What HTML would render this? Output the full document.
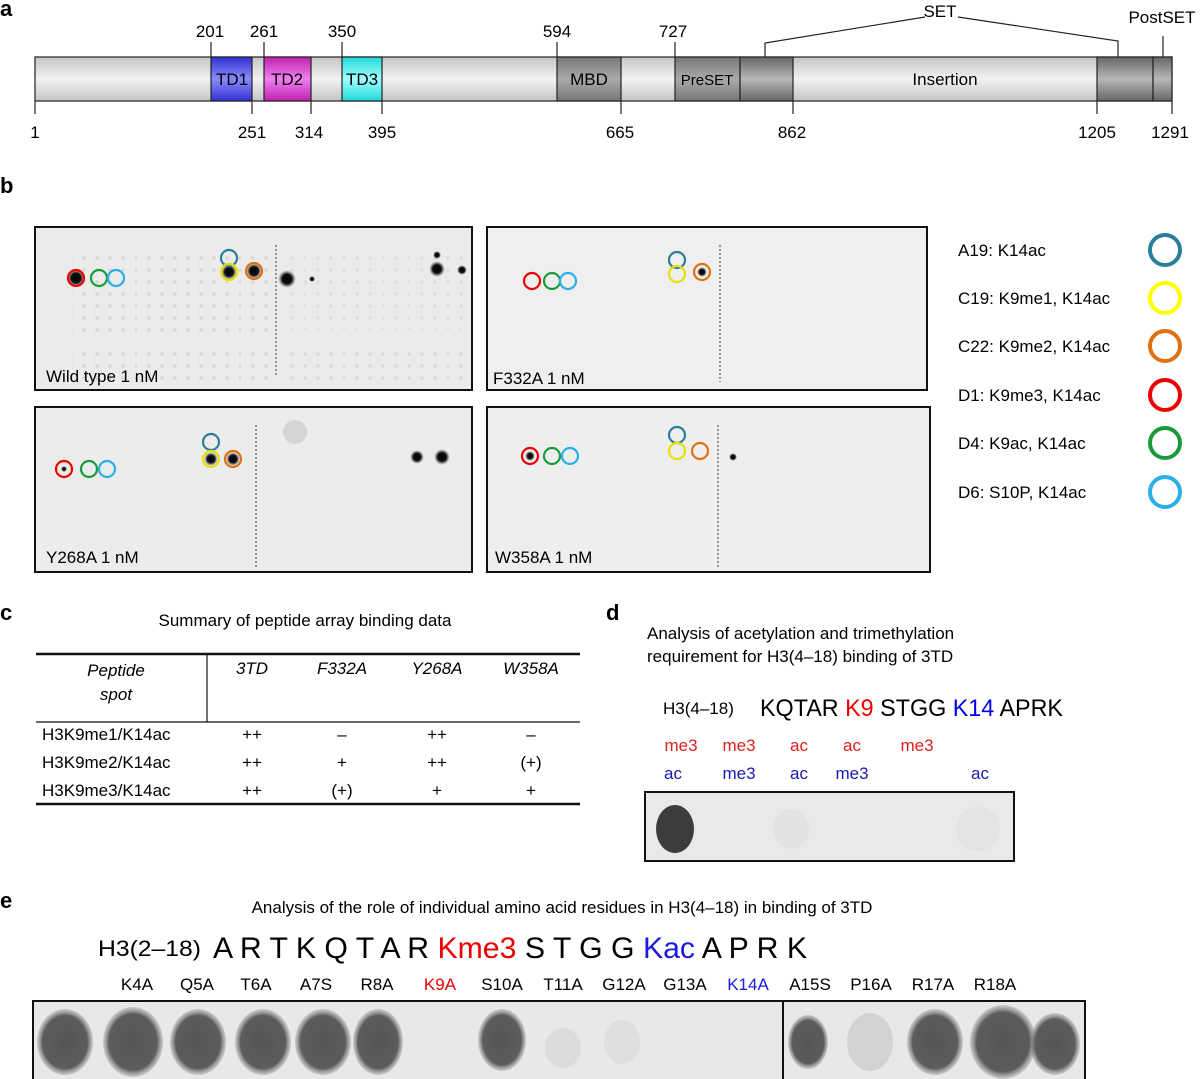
<!DOCTYPE html>
<html><head><meta charset="utf-8"><style>
html,body{margin:0;padding:0;background:#fff}
svg{display:block}
text{font-family:"Liberation Sans",Arial,sans-serif}
</style></head><body>
<svg width="1200" height="1079" viewBox="0 0 1200 1079" xmlns="http://www.w3.org/2000/svg">
<defs>
<linearGradient id="gl" x1="0" y1="0" x2="0" y2="1"><stop offset="0" stop-color="#c4c4c4"/><stop offset=".5" stop-color="#f2f2f2"/><stop offset="1" stop-color="#c4c4c4"/></linearGradient>
<linearGradient id="gd" x1="0" y1="0" x2="0" y2="1"><stop offset="0" stop-color="#666"/><stop offset=".5" stop-color="#b8b8b8"/><stop offset="1" stop-color="#666"/></linearGradient>
<linearGradient id="gm" x1="0" y1="0" x2="0" y2="1"><stop offset="0" stop-color="#777"/><stop offset=".5" stop-color="#aaa"/><stop offset="1" stop-color="#777"/></linearGradient>
<linearGradient id="gb" x1="0" y1="0" x2="0" y2="1"><stop offset="0" stop-color="#3030d0"/><stop offset=".5" stop-color="#8a8aff"/><stop offset="1" stop-color="#3030d0"/></linearGradient>
<linearGradient id="gp" x1="0" y1="0" x2="0" y2="1"><stop offset="0" stop-color="#c020b0"/><stop offset=".5" stop-color="#f080f0"/><stop offset="1" stop-color="#c020b0"/></linearGradient>
<linearGradient id="gc" x1="0" y1="0" x2="0" y2="1"><stop offset="0" stop-color="#20d8d8"/><stop offset=".5" stop-color="#a0ffff"/><stop offset="1" stop-color="#20d8d8"/></linearGradient>
<radialGradient id="sp"><stop offset="0" stop-color="#000"/><stop offset=".55" stop-color="#111"/><stop offset="1" stop-color="#666" stop-opacity="0"/></radialGradient>
<radialGradient id="ds"><stop offset="0" stop-color="#555"/><stop offset=".8" stop-color="#5c5c5c"/><stop offset="1" stop-color="#888" stop-opacity=".3"/></radialGradient>
<pattern id="dots" width="13" height="12" patternUnits="userSpaceOnUse"><circle cx="6" cy="6" r="1.8" fill="#d0d0d0"/></pattern>
</defs>

<!-- a -->
<text x="0" y="16" font-size="22" font-weight="bold">a</text>
<g stroke="#222" stroke-width="1.2">
<rect x="35" y="57" width="1137" height="44" fill="url(#gl)"/>
<rect x="211" y="57" width="41" height="44" fill="url(#gb)"/>
<rect x="264" y="57" width="47" height="44" fill="url(#gp)"/>
<rect x="342" y="57" width="40" height="44" fill="url(#gc)"/>
<rect x="557" y="57" width="64" height="44" fill="url(#gm)"/>
<rect x="675" y="57" width="65" height="44" fill="url(#gm)"/>
<rect x="740" y="57" width="53" height="44" fill="url(#gd)"/>
<rect x="1097" y="57" width="56" height="44" fill="url(#gd)"/>
<rect x="1153" y="57" width="19" height="44" fill="url(#gd)"/>
<path d="M35 101V114M252 101V114M311 101V114M382 101V114M621 101V114M793 101V114M1097 101V114M1172 101V114M211 57V42M264 57V42M342 57V42M557 57V42M675 57V42M1163 57V36" fill="none"/>
<path d="M765 57V43L925 17M958 17L1118 41V57" fill="none"/>
</g>
<g font-size="17" text-anchor="middle">
<text x="232" y="85">TD1</text><text x="287" y="85">TD2</text><text x="362" y="85">TD3</text>
<text x="589" y="85">MBD</text><text x="707" y="85" font-size="15">PreSET</text><text x="945" y="85">Insertion</text>
<text x="210" y="37">201</text><text x="264" y="37">261</text><text x="342" y="37">350</text><text x="557" y="37">594</text><text x="673" y="37">727</text>
<text x="940" y="17">SET</text><text x="1162" y="23">PostSET</text>
<text x="35" y="138">1</text><text x="252" y="138">251</text><text x="309" y="138">314</text><text x="382" y="138">395</text><text x="620" y="138">665</text><text x="792" y="138">862</text><text x="1097" y="138">1205</text><text x="1170" y="138">1291</text>
</g>

<!-- b -->
<text x="0" y="193" font-size="22" font-weight="bold">b</text>
<g stroke="#111" stroke-width="2">
<rect x="35" y="227" width="437" height="163" fill="#ebebeb"/>
<rect x="487" y="227" width="440" height="163" fill="#efefef"/>
<rect x="35" y="407" width="437" height="165" fill="#ececec"/>
<rect x="487" y="407" width="443" height="165" fill="#eeeeee"/>
</g>
<rect x="72" y="250" width="200" height="88" fill="url(#dots)" opacity=".7"/>
<rect x="72" y="350" width="200" height="30" fill="url(#dots)" opacity=".7"/>
<rect x="282" y="250" width="185" height="80" fill="url(#dots)" opacity=".5"/>
<rect x="282" y="345" width="185" height="35" fill="url(#dots)" opacity=".6"/>
<g stroke="#666" stroke-width="1.3" stroke-dasharray="2 2">
<path d="M276 245V375M720 245V382M256 425V568M718 425V568"/>
</g>
<g fill="url(#sp)">
<circle cx="76" cy="278" r="9"/><circle cx="229" cy="272" r="8"/><circle cx="254" cy="271" r="8"/><circle cx="287" cy="279" r="9"/><circle cx="437" cy="269" r="8"/><circle cx="462" cy="270" r="5"/><circle cx="437" cy="255" r="4"/><circle cx="312" cy="279" r="3"/>
<circle cx="702" cy="272" r="5"/>
<circle cx="211" cy="459" r="7"/><circle cx="233" cy="459" r="7"/><circle cx="417" cy="457" r="7"/><circle cx="442" cy="457" r="8"/>
<circle cx="530" cy="456" r="5"/><circle cx="733" cy="457" r="4"/><circle cx="64" cy="469" r="3"/>
</g>
<circle cx="295" cy="432" r="12" fill="#c8c8c8" opacity=".6"/>
<g fill="none" stroke-width="2.2">
<g><circle cx="76" cy="278" r="8" stroke="#e00"/><circle cx="99" cy="278" r="8" stroke="#1a9a3a"/><circle cx="116" cy="278" r="8" stroke="#2ab0e8"/><circle cx="229" cy="258" r="8" stroke="#2a7f9a"/><circle cx="229" cy="272" r="8" stroke="#e8e000"/><circle cx="254" cy="271" r="8" stroke="#e07010"/></g>
<g><circle cx="532" cy="281" r="8" stroke="#e00"/><circle cx="552" cy="281" r="8" stroke="#1a9a3a"/><circle cx="568" cy="281" r="8" stroke="#2ab0e8"/><circle cx="677" cy="260" r="8" stroke="#2a7f9a"/><circle cx="677" cy="274" r="8" stroke="#e8e000"/><circle cx="702" cy="272" r="8" stroke="#e07010"/></g>
<g><circle cx="64" cy="469" r="8" stroke="#e00"/><circle cx="89" cy="469" r="8" stroke="#1a9a3a"/><circle cx="107" cy="469" r="8" stroke="#2ab0e8"/><circle cx="211" cy="442" r="8" stroke="#2a7f9a"/><circle cx="211" cy="459" r="8" stroke="#e8e000"/><circle cx="233" cy="459" r="8" stroke="#e07010"/></g>
<g><circle cx="530" cy="456" r="8" stroke="#e00"/><circle cx="552" cy="456" r="8" stroke="#1a9a3a"/><circle cx="570" cy="456" r="8" stroke="#2ab0e8"/><circle cx="677" cy="435" r="8" stroke="#2a7f9a"/><circle cx="677" cy="451" r="8" stroke="#e8e000"/><circle cx="700" cy="451" r="8" stroke="#e07010"/></g>
</g>
<g font-size="17">
<text x="46" y="382">Wild type 1 nM</text><text x="493" y="384">F332A 1 nM</text>
<text x="46" y="563">Y268A 1 nM</text><text x="495" y="563">W358A 1 nM</text>
<text x="958" y="256">A19: K14ac</text><text x="958" y="304">C19: K9me1, K14ac</text><text x="958" y="352">C22: K9me2, K14ac</text>
<text x="958" y="401">D1: K9me3, K14ac</text><text x="958" y="449">D4: K9ac, K14ac</text><text x="958" y="498">D6: S10P, K14ac</text>
</g>
<g fill="none" stroke-width="4">
<circle cx="1165" cy="250" r="15" stroke="#2a7f9a"/><circle cx="1165" cy="298" r="15" stroke="#ffff00"/><circle cx="1165" cy="346" r="15" stroke="#e07010"/>
<circle cx="1165" cy="395" r="15" stroke="#e00"/><circle cx="1165" cy="443" r="15" stroke="#1a9a3a"/><circle cx="1165" cy="492" r="15" stroke="#2ab0e8"/>
</g>

<!-- c -->
<text x="0" y="620" font-size="22" font-weight="bold">c</text>
<text x="305" y="626" font-size="17" text-anchor="middle">Summary of peptide array binding data</text>
<path d="M36 654H580M36 804H580" stroke="#111" stroke-width="2.5"/>
<path d="M36 722H580M207 654V722" stroke="#111" stroke-width="1.2"/>
<g font-size="17" font-style="italic" text-anchor="middle">
<text x="116" y="676">Peptide</text><text x="116" y="700">spot</text>
<text x="252" y="674">3TD</text><text x="342" y="674">F332A</text><text x="437" y="674">Y268A</text><text x="531" y="674">W358A</text>
</g>
<g font-size="17">
<text x="42" y="740">H3K9me1/K14ac</text><text x="42" y="768">H3K9me2/K14ac</text><text x="42" y="796">H3K9me3/K14ac</text>
</g>
<g font-size="17" text-anchor="middle">
<text x="252" y="740">++</text><text x="342" y="740">–</text><text x="437" y="740">++</text><text x="531" y="740">–</text>
<text x="252" y="768">++</text><text x="342" y="768">+</text><text x="437" y="768">++</text><text x="531" y="768">(+)</text>
<text x="252" y="796">++</text><text x="342" y="796">(+)</text><text x="437" y="796">+</text><text x="531" y="796">+</text>
</g>

<!-- d -->
<text x="606" y="620" font-size="22" font-weight="bold">d</text>
<text x="647" y="639" font-size="17">Analysis of acetylation and trimethylation</text>
<text x="647" y="662" font-size="17">requirement for H3(4–18) binding of 3TD</text>
<text x="663" y="714" font-size="17">H3(4–18)</text>
<text x="760" y="716" font-size="24" font-family="DejaVu Sans, sans-serif" textLength="303" lengthAdjust="spacingAndGlyphs">KQTAR <tspan fill="#e00">K9</tspan> STGG <tspan fill="#00e">K14</tspan> APRK</text>
<g font-size="17" fill="#e02020" text-anchor="middle"><text x="681" y="751">me3</text><text x="739" y="751">me3</text><text x="799" y="751">ac</text><text x="852" y="751">ac</text><text x="917" y="751">me3</text></g>
<g font-size="17" fill="#1a1ab0" text-anchor="middle"><text x="673" y="779">ac</text><text x="739" y="779">me3</text><text x="799" y="779">ac</text><text x="852" y="779">me3</text><text x="980" y="779">ac</text></g>
<rect x="645" y="792" width="369" height="69" fill="#e9e9e9" stroke="#111" stroke-width="2"/>
<ellipse cx="675" cy="829" rx="19" ry="24" fill="#3c3c3c"/>
<ellipse cx="791" cy="829" rx="18" ry="20" fill="#e2e2e2"/>
<ellipse cx="978" cy="829" rx="22" ry="22" fill="#e3e3e3"/>

<!-- e -->
<text x="0" y="908" font-size="22" font-weight="bold">e</text>
<text x="562" y="913" font-size="17" text-anchor="middle">Analysis of the role of individual amino acid residues in H3(4–18) in binding of 3TD</text>
<text x="98" y="956" font-size="22" textLength="103" lengthAdjust="spacingAndGlyphs">H3(2–18)</text>
<text x="213" y="958" font-size="30" textLength="594" lengthAdjust="spacingAndGlyphs">A R T K Q T A R <tspan fill="#e00">Kme3</tspan> S T G G <tspan fill="#1a1ae0">Kac</tspan> A P R K</text>
<g font-size="17" text-anchor="middle">
<text x="137" y="990">K4A</text><text x="197" y="990">Q5A</text><text x="256" y="990">T6A</text><text x="316" y="990">A7S</text><text x="377" y="990">R8A</text><text x="440" y="990" fill="#e00">K9A</text><text x="502" y="990">S10A</text><text x="563" y="990">T11A</text><text x="624" y="990">G12A</text><text x="685" y="990">G13A</text><text x="748" y="990" fill="#1a1ae0">K14A</text><text x="810" y="990">A15S</text><text x="871" y="990">P16A</text><text x="933" y="990">R17A</text><text x="995" y="990">R18A</text>
</g>
<rect x="33" y="1001" width="1052" height="80" fill="#e8e8e8" stroke="#111" stroke-width="2"/>
<path d="M783 1001V1079" stroke="#111" stroke-width="2"/>
<g fill="url(#ds)">
<ellipse cx="65" cy="1042" rx="28" ry="33"/><ellipse cx="133" cy="1042" rx="30" ry="35"/><ellipse cx="198" cy="1042" rx="28" ry="33"/><ellipse cx="263" cy="1042" rx="28" ry="33"/><ellipse cx="323" cy="1042" rx="28" ry="33"/><ellipse cx="378" cy="1042" rx="25" ry="33"/>
<ellipse cx="502" cy="1040" rx="24" ry="31"/><ellipse cx="808" cy="1042" rx="20" ry="27"/><ellipse cx="935" cy="1042" rx="28" ry="33"/><ellipse cx="1003" cy="1042" rx="33" ry="37"/><ellipse cx="1055" cy="1044" rx="25" ry="31"/>
</g>
<ellipse cx="563" cy="1048" rx="18" ry="20" fill="#dcdcdc"/><ellipse cx="622" cy="1042" rx="18" ry="22" fill="#dedede"/><ellipse cx="870" cy="1042" rx="23" ry="29" fill="#d3d3d3"/>
</svg>
</body></html>
